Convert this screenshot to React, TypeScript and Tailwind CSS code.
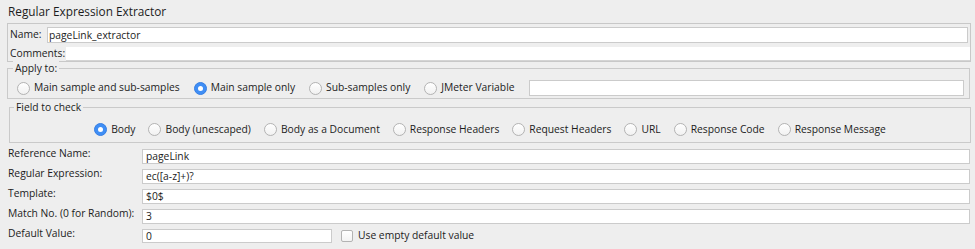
import React from "react";

const font = { fontFamily: '"Open Sans", "DejaVu Sans", sans-serif' };

function Radio({ checked = false }: { checked?: boolean }) {
  if (checked) {
    return (
      <span className="w-[13px] h-[13px] shrink-0 rounded-full bg-[#3f8ef5] border border-[#377fe3] flex items-center justify-center">
        <span className="w-[5px] h-[5px] rounded-full bg-white" />
      </span>
    );
  }
  return (
    <span className="w-[13px] h-[13px] shrink-0 rounded-full bg-gradient-to-b from-white to-[#f1f1f1] border border-[#b3b3b3]" />
  );
}

function RadioItem({ label, checked = false }: { label: string; checked?: boolean }) {
  return (
    <div className="flex items-center">
      <Radio checked={checked} />
      <span className="ml-[4px] whitespace-nowrap">{label}</span>
    </div>
  );
}

function Row({ label, value }: { label: string; value: string }) {
  return (
    <div className="flex items-start h-[20px]">
      <div className="w-[134px] shrink-0 mt-[2px] leading-[14px] whitespace-nowrap">{label}</div>
      <div className="flex-1 mt-[5px] mr-[5px] h-[15px] bg-white border border-[#cbcbcb] pl-[3px] leading-[13px] whitespace-nowrap">
        {value}
      </div>
    </div>
  );
}

export default function App() {
  return (
    <div
      className="w-[975px] h-[249px] overflow-hidden bg-[#eeeeee] text-[10.3px] text-[#1c1c1c]"
      style={font}
    >
      <div className="h-[23px] pl-[8px] pt-[3px] text-[11.8px] leading-[17px]">Regular Expression Extractor</div>

      <div className="ml-[7px] mr-[4px] h-[39px] border border-[#c8c8c8] flex flex-col">
        <div className="flex items-center mt-[3px] h-[16px]">
          <span className="pl-[2px] w-[39px] shrink-0">Name:</span>
          <div className="flex-1 mr-[2px] h-[16px] bg-white border border-[#cbcbcb] pl-[1px] leading-[14px] whitespace-nowrap">
            pageLink_extractor
          </div>
        </div>
        <div className="flex items-center mt-[4px] h-[14px]">
          <span className="pl-[2px] w-[58px] shrink-0">Comments:</span>
          <div className="flex-1 h-[14px] bg-white border-b border-[#d4d4d4]" />
        </div>
      </div>

      <div className="relative ml-[7px] mr-[5px] mt-[6px] h-[31px] border border-[#cacaca] flex items-end pb-[2px]">
        <span className="absolute left-[5px] -top-[8px] px-[2px] bg-[#eeeeee] leading-[14px]">Apply to:</span>
        <div className="flex items-center gap-[14px] pl-[9px] w-full">
          <RadioItem label="Main sample and sub-samples" />
          <RadioItem label="Main sample only" checked />
          <RadioItem label="Sub-samples only" />
          <RadioItem label="JMeter Variable" />
          <div className="flex-1 mr-[5px] h-[16px] bg-white border border-[#cbcbcb]" />
        </div>
      </div>

      <div className="relative ml-[9px] mr-[4px] mt-[8px] h-[36px] border border-[#cacaca] flex items-end justify-center pb-[5px]">
        <span className="absolute left-[4px] -top-[8px] px-[2px] bg-[#eeeeee] leading-[14px]">Field to check</span>
        <div className="flex items-center gap-[13px]">
          <RadioItem label="Body" checked />
          <RadioItem label="Body (unescaped)" />
          <RadioItem label="Body as a Document" />
          <RadioItem label="Response Headers" />
          <RadioItem label="Request Headers" />
          <RadioItem label="URL" />
          <RadioItem label="Response Code" />
          <RadioItem label="Response Message" />
        </div>
      </div>

      <div className="pl-[8px] mt-[1px] flex flex-col">
        <Row label="Reference Name:" value="pageLink" />
        <Row label="Regular Expression:" value="ec([a-z]+)?" />
        <Row label="Template:" value="$0$" />
        <Row label="Match No. (0 for Random):" value="3" />
        <div className="flex items-start h-[20px]">
          <div className="w-[134px] shrink-0 mt-[2px] leading-[14px] whitespace-nowrap">Default Value:</div>
          <div className="w-[190px] mt-[5px] h-[14px] bg-white border border-[#cbcbcb] pl-[3px] leading-[12px]">0</div>
          <div className="flex items-center mt-[5px] h-[14px] ml-[9px]">
            <span className="w-[12px] h-[12px] rounded-[2px] bg-gradient-to-b from-white to-[#f3f3f3] border border-[#b3b3b3]" />
            <span className="ml-[5px] whitespace-nowrap">Use empty default value</span>
          </div>
        </div>
      </div>
    </div>
  );
}
